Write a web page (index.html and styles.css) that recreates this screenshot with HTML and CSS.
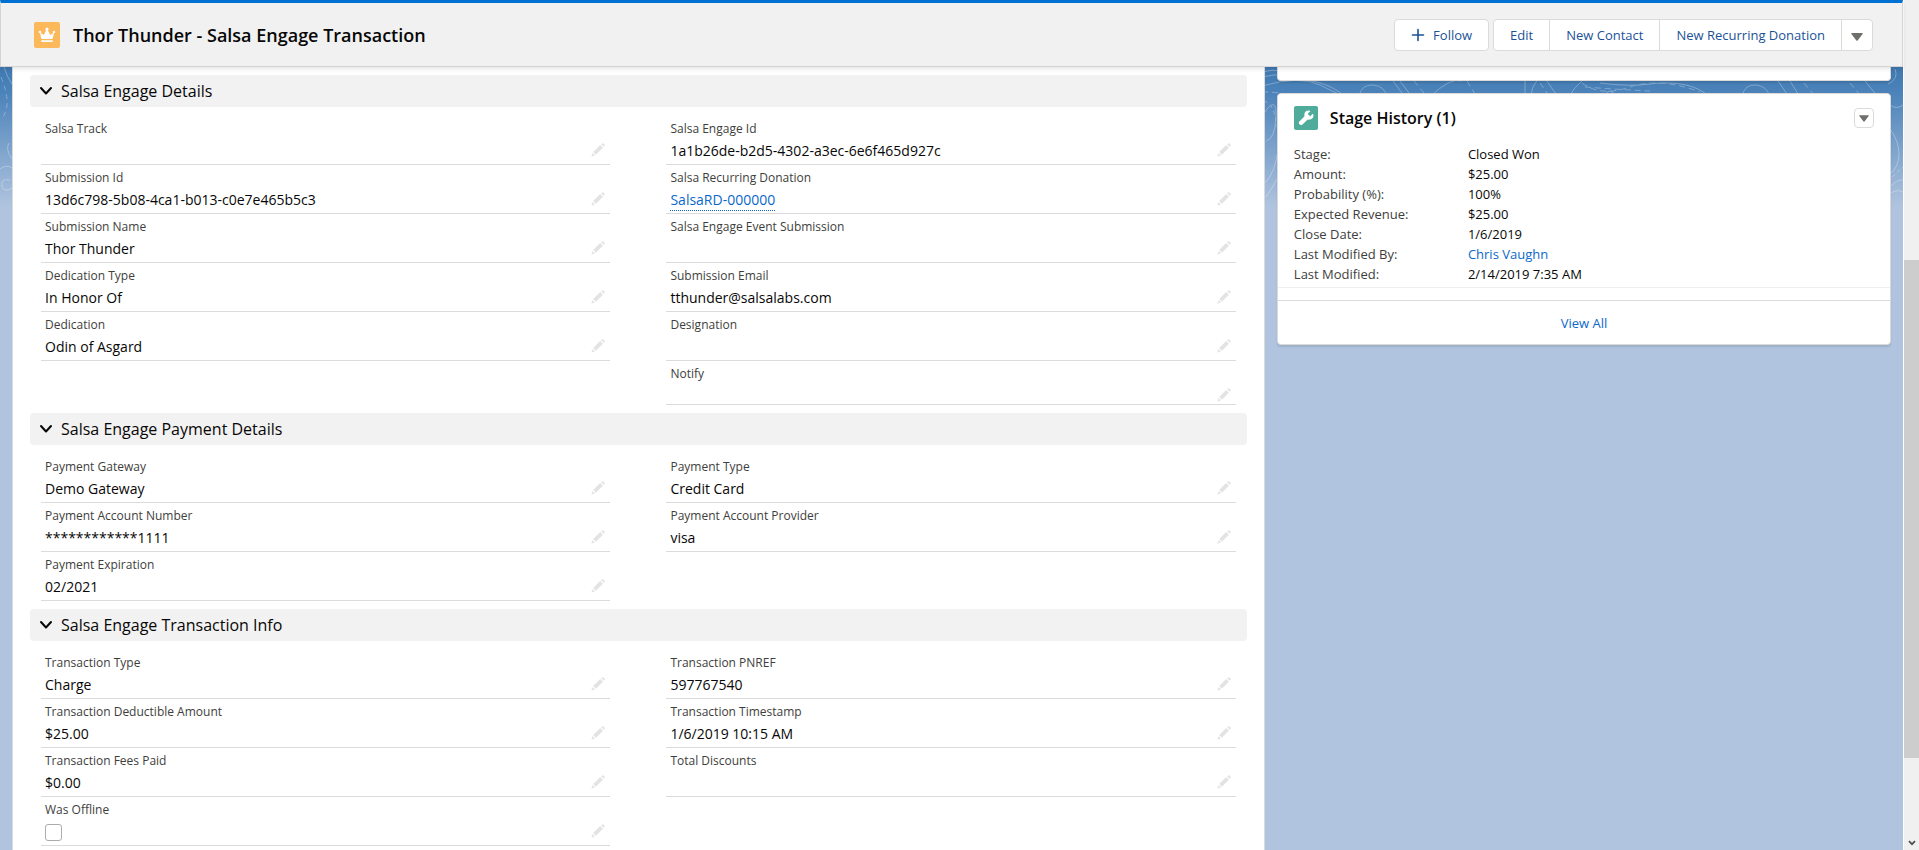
FILE: index.html
```
<!DOCTYPE html>
<html lang="en">
<head>
    <meta charset="UTF-8">
    <meta name="viewport" content="width=device-width, initial-scale=1.0">
    <title>Thor Thunder - Salsa Engage Transaction</title>
    <link rel="stylesheet" href="styles.css">
</head>
<body>
    <!-- Shared icons -->
    <svg class="sprite" aria-hidden="true">
        <symbol id="pencil" viewBox="0 0 14 14">
            <path d="M10.2 1.3 11.2 .4Q11.8 0 12.4 .5L13.5 1.600Q14 2.200 13.500 2.800L12.600 3.800Z"/>
            <path d="M9.200 2.100 11.900 4.700 4.900 11.800 2.200 9.100Z"/>
            <path d="M1.600 10.100 3.900 12.400 .9 13.500Q.3 13.600 .5 13Z"/>
        </symbol>
        <symbol id="chevron" viewBox="0 0 14 10">
            <path d="M2 2 7 7.500 12 2" fill="none" stroke="currentColor" stroke-width="2" stroke-linecap="round" stroke-linejoin="round"/>
        </symbol>
        <symbol id="down" viewBox="0 0 12 8">
            <path d="M.8 0H11.200Q12 .2 11.600 .9L6.600 7.500Q6 8 5.400 7.500L.4 .9Q0 .2 .8 0Z"/>
        </symbol>
    </svg>

    <div class="app">
        <div class="page">
            <header class="page-header">
                <span class="record-icon">
                    <svg viewBox="0 0 26 26" width="26" height="26" fill="#fff">
                        <circle cx="6" cy="10" r="1.200"/>
                        <circle cx="13" cy="7" r="1.600"/>
                        <circle cx="20" cy="10" r="1.200"/>
                        <path d="M6 10.500 9.800 13 12.300 8H13.700L16.200 13 20 10.500 18.800 16.300Q18.700 17 18 17H8Q7.300 17 7.200 16.300Z"/>
                        <path d="M7.800 18.200H18.200Q18.800 18.200 18.800 18.800V19.400Q18.800 20 18.200 20H7.800Q7.200 20 7.200 19.400V18.800Q7.200 18.200 7.800 18.200Z"/>
                    </svg>
                </span>
                <h1>Thor Thunder - Salsa Engage Transaction</h1>
                <div class="actions">
                    <button type="button" class="btn btn-follow">
                        <svg viewBox="0 0 14 14" width="14" height="14"><path d="M7 1.500V12.500M1.500 7H12.500" stroke="currentColor" stroke-width="1.600" stroke-linecap="round"/></svg>
                        Follow
                    </button>
                    <div class="btn-group">
                        <button type="button" class="btn">Edit</button>
                        <button type="button" class="btn">New Contact</button>
                        <button type="button" class="btn">New Recurring Donation</button>
                        <button type="button" class="btn btn-more" aria-label="More actions"><svg width="12" height="8"><use href="#down"/></svg></button>
                    </div>
                </div>
            </header>

            <main class="content">
                <!-- Contour line pattern behind the cards -->
                <svg class="pattern" aria-hidden="true">
                    <g fill="none" stroke="#fff" stroke-width="1">
                        <path d="M4 0Q7 10 12 17M9 76Q5 82 12 92M0 102Q6 97 12 101M10 113Q0 111 2 120Q5 126 12 121"/>
                        <path d="M1 10Q6 22 7 32Q8 42 2 52" stroke-dasharray="5 4"/>
                        <path d="M1262 5Q1272 2 1282 4M1262 10Q1275 7 1284 8M1262 19Q1300 8 1320 18T1345 30M1282 14Q1320 8 1346 30M1359 30Q1361 17 1373 18Q1385 19 1387 30M1393 14 1405 30M1400 14 1412 30M1430 30Q1450 10 1462 14M1525 30V14M1532 30Q1530 22 1537 14M1547 14Q1553 24 1559 30M1569 30Q1574 20 1582 14M1600 16Q1630 20 1650 17Q1690 12 1710 30M1604 30Q1609 18 1617 30M1742 30Q1744 17 1756 18Q1767 19 1770 30M1778 14 1789 30M1790 14 1800 30M1865 14 1878 30"/>
                        <path d="M1262 25Q1285 25 1295 30M1414 14 1424 26M1467 14 1475 27M1540 16 1550 30M1582 16Q1600 30 1630 20T1700 25M1804 16 1814 28M1850 16 1860 28M1585 20Q1610 22 1650 24" stroke-dasharray="6 4"/>
                        <path d="M1265 45Q1277 28 1276 50T1266 74M1265 116Q1275 105 1277 88M1266 130Q1273 120 1277 112"/>
                        <path d="M1264 34Q1276 38 1276 60" stroke-dasharray="4 3"/>
                        <path d="M1895 2Q1899 12 1888 17M1890 38Q1897 43 1903 38M1890 62Q1899 74 1899 87T1890 107M1891 119Q1898 112 1903 113M1891 126Q1897 122 1903 125"/>
                        <path d="M1892 110 1903 100" stroke-dasharray="4 3"/>
                    </g>
                </svg>

                <section class="details">
                    <h2 class="section-title"><button type="button"><svg width="14" height="10"><use href="#chevron"/></svg>Salsa Engage Details</button></h2>
                    <div class="fields">
                        <div class="column">
                            <div class="field">
                                <div class="label">Salsa Track</div>
                                <div class="value"></div>
                                <button type="button" class="edit" aria-label="Edit Salsa Track"><svg><use href="#pencil"/></svg></button>
                            </div>
                            <div class="field">
                                <div class="label">Submission Id</div>
                                <div class="value">13d6c798-5b08-4ca1-b013-c0e7e465b5c3</div>
                                <button type="button" class="edit" aria-label="Edit Submission Id"><svg><use href="#pencil"/></svg></button>
                            </div>
                            <div class="field">
                                <div class="label">Submission Name</div>
                                <div class="value">Thor Thunder</div>
                                <button type="button" class="edit" aria-label="Edit Submission Name"><svg><use href="#pencil"/></svg></button>
                            </div>
                            <div class="field">
                                <div class="label">Dedication Type</div>
                                <div class="value">In Honor Of</div>
                                <button type="button" class="edit" aria-label="Edit Dedication Type"><svg><use href="#pencil"/></svg></button>
                            </div>
                            <div class="field">
                                <div class="label">Dedication</div>
                                <div class="value">Odin of Asgard</div>
                                <button type="button" class="edit" aria-label="Edit Dedication"><svg><use href="#pencil"/></svg></button>
                            </div>
                        </div>
                        <div class="column">
                            <div class="field">
                                <div class="label">Salsa Engage Id</div>
                                <div class="value">1a1b26de-b2d5-4302-a3ec-6e6f465d927c</div>
                                <button type="button" class="edit" aria-label="Edit Salsa Engage Id"><svg><use href="#pencil"/></svg></button>
                            </div>
                            <div class="field">
                                <div class="label">Salsa Recurring Donation</div>
                                <div class="value"><a href="#" class="lookup">SalsaRD-000000</a></div>
                                <button type="button" class="edit" aria-label="Edit Salsa Recurring Donation"><svg><use href="#pencil"/></svg></button>
                            </div>
                            <div class="field">
                                <div class="label">Salsa Engage Event Submission</div>
                                <div class="value"></div>
                                <button type="button" class="edit" aria-label="Edit Salsa Engage Event Submission"><svg><use href="#pencil"/></svg></button>
                            </div>
                            <div class="field">
                                <div class="label">Submission Email</div>
                                <div class="value">tthunder@salsalabs.com</div>
                                <button type="button" class="edit" aria-label="Edit Submission Email"><svg><use href="#pencil"/></svg></button>
                            </div>
                            <div class="field">
                                <div class="label">Designation</div>
                                <div class="value"></div>
                                <button type="button" class="edit" aria-label="Edit Designation"><svg><use href="#pencil"/></svg></button>
                            </div>
                            <div class="field field-short">
                                <div class="label">Notify</div>
                                <div class="value"></div>
                                <button type="button" class="edit" aria-label="Edit Notify"><svg><use href="#pencil"/></svg></button>
                            </div>
                        </div>
                    </div>

                    <h2 class="section-title"><button type="button"><svg width="14" height="10"><use href="#chevron"/></svg>Salsa Engage Payment Details</button></h2>
                    <div class="fields">
                        <div class="column">
                            <div class="field">
                                <div class="label">Payment Gateway</div>
                                <div class="value">Demo Gateway</div>
                                <button type="button" class="edit" aria-label="Edit Payment Gateway"><svg><use href="#pencil"/></svg></button>
                            </div>
                            <div class="field">
                                <div class="label">Payment Account Number</div>
                                <div class="value">************1111</div>
                                <button type="button" class="edit" aria-label="Edit Payment Account Number"><svg><use href="#pencil"/></svg></button>
                            </div>
                            <div class="field">
                                <div class="label">Payment Expiration</div>
                                <div class="value">02/2021</div>
                                <button type="button" class="edit" aria-label="Edit Payment Expiration"><svg><use href="#pencil"/></svg></button>
                            </div>
                        </div>
                        <div class="column">
                            <div class="field">
                                <div class="label">Payment Type</div>
                                <div class="value">Credit Card</div>
                                <button type="button" class="edit" aria-label="Edit Payment Type"><svg><use href="#pencil"/></svg></button>
                            </div>
                            <div class="field">
                                <div class="label">Payment Account Provider</div>
                                <div class="value">visa</div>
                                <button type="button" class="edit" aria-label="Edit Payment Account Provider"><svg><use href="#pencil"/></svg></button>
                            </div>
                        </div>
                    </div>

                    <h2 class="section-title"><button type="button"><svg width="14" height="10"><use href="#chevron"/></svg>Salsa Engage Transaction Info</button></h2>
                    <div class="fields">
                        <div class="column">
                            <div class="field">
                                <div class="label">Transaction Type</div>
                                <div class="value">Charge</div>
                                <button type="button" class="edit" aria-label="Edit Transaction Type"><svg><use href="#pencil"/></svg></button>
                            </div>
                            <div class="field">
                                <div class="label">Transaction Deductible Amount</div>
                                <div class="value">$25.00</div>
                                <button type="button" class="edit" aria-label="Edit Transaction Deductible Amount"><svg><use href="#pencil"/></svg></button>
                            </div>
                            <div class="field">
                                <div class="label">Transaction Fees Paid</div>
                                <div class="value">$0.00</div>
                                <button type="button" class="edit" aria-label="Edit Transaction Fees Paid"><svg><use href="#pencil"/></svg></button>
                            </div>
                            <div class="field">
                                <label class="label" for="offline">Was Offline</label>
                                <div class="value"><input type="checkbox" id="offline"></div>
                                <button type="button" class="edit" aria-label="Edit Was Offline"><svg><use href="#pencil"/></svg></button>
                            </div>
                        </div>
                        <div class="column">
                            <div class="field">
                                <div class="label">Transaction PNREF</div>
                                <div class="value">597767540</div>
                                <button type="button" class="edit" aria-label="Edit Transaction PNREF"><svg><use href="#pencil"/></svg></button>
                            </div>
                            <div class="field">
                                <div class="label">Transaction Timestamp</div>
                                <div class="value">1/6/2019 10:15 AM</div>
                                <button type="button" class="edit" aria-label="Edit Transaction Timestamp"><svg><use href="#pencil"/></svg></button>
                            </div>
                            <div class="field">
                                <div class="label">Total Discounts</div>
                                <div class="value"></div>
                                <button type="button" class="edit" aria-label="Edit Total Discounts"><svg><use href="#pencil"/></svg></button>
                            </div>
                        </div>
                    </div>
                </section>

                <aside class="related">
                    <div class="card card-end"></div>
                    <div class="card">
                        <div class="card-header">
                            <span class="card-icon">
                                <svg viewBox="0 0 24 24" width="24" height="24"><path fill="#fff" d="M19.300 8.200Q19 7.700 18.500 8.100L16.500 10.100Q16.200 10.400 15.900 10.100L14 8.200Q13.700 7.900 14 7.500L16.100 5.500Q16.400 5 15.900 4.800Q15 4.500 14.200 4.600Q10.400 5 10.300 9Q10.300 9.700 10.500 10.300L5.100 15.700Q4.300 17 5.200 18.100Q6.500 19.700 8.200 18.800L13.700 13.500Q14.300 13.700 15 13.700Q19.200 13.500 19.500 9.600Q19.500 8.800 19.300 8.200Z"/></svg>
                            </span>
                            <h2>Stage History (1)</h2>
                            <button type="button" class="card-menu" aria-label="Show actions"><svg width="10" height="7"><use href="#down"/></svg></button>
                        </div>
                        <dl class="history">
                            <dt>Stage:</dt><dd>Closed Won</dd>
                            <dt>Amount:</dt><dd>$25.00</dd>
                            <dt>Probability (%):</dt><dd>100%</dd>
                            <dt>Expected Revenue:</dt><dd>$25.00</dd>
                            <dt>Close Date:</dt><dd>1/6/2019</dd>
                            <dt>Last Modified By:</dt><dd><a href="#">Chris Vaughn</a></dd>
                            <dt>Last Modified:</dt><dd>2/14/2019 7:35 AM</dd>
                        </dl>
                        <div class="card-footer"><a href="#">View All</a></div>
                    </div>
                </aside>
            </main>
        </div>

        <div class="scrollbar" aria-hidden="true">
            <div class="thumb"></div>
            <svg viewBox="0 0 10 8" width="8" height="6"><path d="M1 1.500 5 5.500 9 1.500" fill="none" stroke="#505050" stroke-width="2.400"/></svg>
        </div>
    </div>
</body>
</html>
```
FILE: styles.css
```
* {
    margin: 0;
    padding: 0;
    box-sizing: border-box;
}

body {
    font-family: "Open Sans", "Noto Sans", sans-serif;
    font-size: 13px;
    color: #080707;
    background-color: #b0c4df;
}

button {
    font: inherit;
    cursor: pointer;
}

a {
    color: #0b68cb;
    text-decoration: none;
}

.sprite {
    position: absolute;
    width: 0;
    height: 0;
}

.app {
    display: flex;
    height: 100vh;
    overflow: hidden;
}

.page {
    flex: 1;
    display: flex;
    flex-direction: column;
    min-width: 0;
}

/* Header */
.page-header {
    position: relative;
    z-index: 2;
    flex: none;
    display: flex;
    align-items: center;
    height: 67px;
    padding: 0 29px 0 33px;
    background-color: #f1f1f1;
    border: 1px solid #d4d4d4;
    border-top: 3px solid #0070d2;
    box-shadow: 0 2px 4px rgba(0, 0, 0, 0.1);
}

.record-icon {
    width: 26px;
    height: 26px;
    margin-right: 13px;
    border-radius: 2px;
    background-color: #fcb95b;
}

.record-icon svg,
.card-icon svg {
    display: block;
}

h1 {
    flex: 1;
    font-size: 18px;
    font-weight: 600;
    line-height: 24px;
}

.actions {
    display: flex;
    gap: 4px;
}

.btn {
    height: 32px;
    padding: 0 16px;
    background-color: #fff;
    border: 1px solid #dddbda;
    border-radius: 4px;
    color: #1b5297;
    line-height: 28px;
}

.btn-follow {
    display: flex;
    align-items: center;
    gap: 8px;
}

.btn-group {
    display: flex;
}

.btn-group .btn {
    border-radius: 0;
    margin-left: -1px;
}

.btn-group .btn:first-child {
    border-radius: 4px 0 0 4px;
    margin-left: 0;
}

.btn-group .btn:last-child {
    border-radius: 0 4px 4px 0;
}

.btn-more {
    width: 32px;
    padding: 4px 0 0;
    line-height: 0;
}

.btn-more svg,
.card-menu svg {
    fill: #706e6b;
}

/* Content */
.content {
    position: relative;
    flex: 1;
    display: grid;
    grid-template-columns: 2.04fr 1fr;
    gap: 12px;
    min-height: 0;
    padding: 0 12px;
    background: linear-gradient(#4079b1, #4a82b9 24px, #b0c4df 140px);
}

.pattern {
    position: absolute;
    top: 0;
    left: 0;
    width: 100%;
    height: 100%;
    opacity: 0.3;
}

.details {
    position: relative;
    padding: 8px 17px;
    background-color: #fff;
    border: 1px solid #dddbda;
    border-top: 0;
    border-bottom: 0;
}

.section-title button {
    display: flex;
    align-items: center;
    gap: 8px;
    width: 100%;
    height: 32px;
    padding: 0 9px;
    background-color: #f2f2f2;
    border: 0;
    border-radius: 4px;
    color: #080707;
    font-size: 16px;
    font-weight: 400;
}

.fields {
    display: grid;
    grid-template-columns: 1fr 1fr;
    gap: 56px;
    padding: 9px 11px 8px;
}

.field {
    position: relative;
    height: 49px;
    padding: 4px;
    border-bottom: 1px solid #dddbda;
}

.field-short {
    height: 44px;
}

.label {
    display: block;
    color: #3e3e3c;
    font-size: 12px;
    line-height: 18px;
}

.value {
    font-size: 14px;
    line-height: 26px;
}

.lookup {
    display: inline-block;
    line-height: 20px;
    border-bottom: 1px dotted #0b68cb;
}

.value input {
    appearance: none;
    display: block;
    width: 17px;
    height: 17px;
    margin-top: 5px;
    background-color: #fff;
    border: 1px solid #aeacab;
    border-radius: 3px;
}

.edit {
    position: absolute;
    top: 27px;
    right: 5px;
    width: 14px;
    height: 14px;
    background: none;
    border: 0;
}

.edit svg {
    display: block;
    width: 14px;
    height: 14px;
    fill: #e4e3e2;
}

/* Related lists */
.related {
    position: relative;
}

.card {
    margin-bottom: 12px;
    background-color: #fff;
    border: 1px solid #dddbda;
    border-radius: 4px;
    box-shadow: 0 2px 2px rgba(0, 0, 0, 0.1);
}

.card-end {
    height: 14px;
    border-top: 0;
    border-radius: 0 0 4px 4px;
}

.card-header {
    display: flex;
    align-items: center;
    padding: 12px 16px 14px;
}

.card-icon {
    width: 24px;
    height: 24px;
    margin-right: 12px;
    border-radius: 2px;
    background-color: #4fac9b;
}

.card-header h2 {
    flex: 1;
    font-size: 16px;
    font-weight: 600;
    line-height: 24px;
}

.card-menu {
    width: 20px;
    height: 20px;
    background-color: #fff;
    border: 1px solid #dddbda;
    border-radius: 4px;
    line-height: 0;
}

.history {
    display: grid;
    grid-template-columns: 30% 1fr;
    padding: 0 16px 3px;
    border-bottom: 1px solid #f0efee;
    line-height: 20px;
}

.history dt {
    color: #3e3e3c;
}

.card-footer {
    margin-top: 12px;
    padding: 12px 12px 11px;
    border-top: 1px solid #dddbda;
    text-align: center;
    line-height: 20px;
}

/* Scrollbar track at the window edge */
.scrollbar {
    display: flex;
    flex-direction: column;
    align-items: center;
    justify-content: space-between;
    width: 16px;
    padding: 260px 0 4px;
    background-color: #f0f0f0;
    border-left: 1px solid #fff;
}

.thumb {
    width: 100%;
    height: 85%;
    background-color: #cdcdcd;
}
```
